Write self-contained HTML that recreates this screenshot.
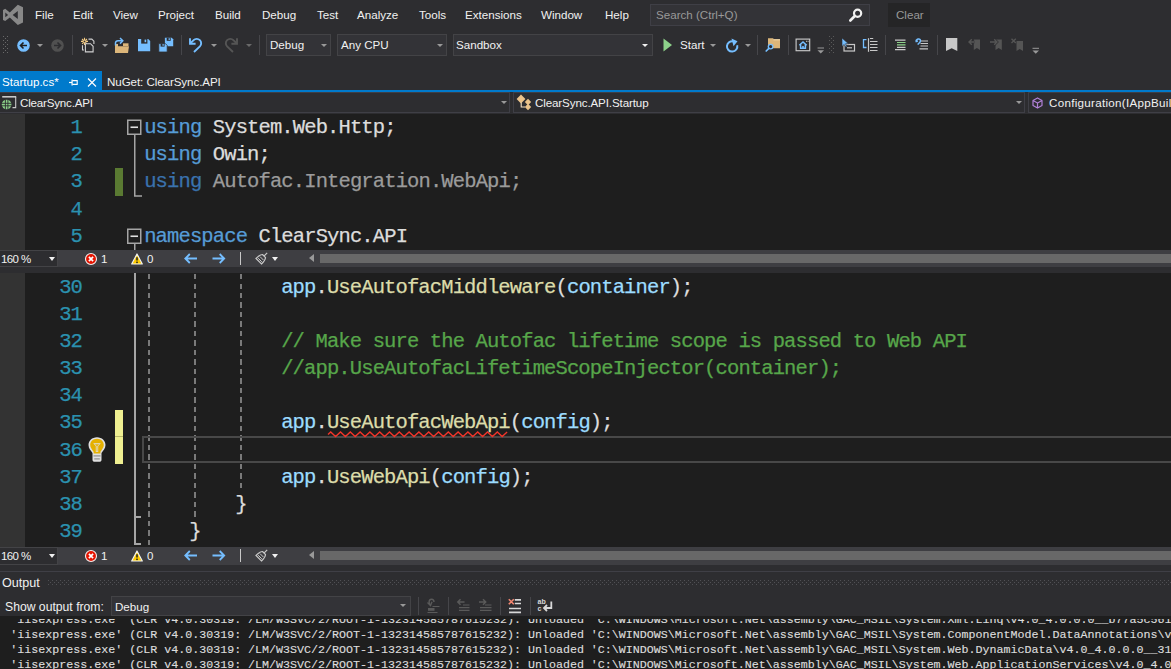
<!DOCTYPE html>
<html><head><meta charset="utf-8">
<style>
*{margin:0;padding:0;box-sizing:border-box}
html,body{width:1171px;height:669px;overflow:hidden;background:#2D2D30}
body{position:relative;font-family:"Liberation Sans",sans-serif;font-size:11.6px;color:#F1F1F1}
.a{position:absolute}
.t{position:absolute;white-space:pre;line-height:14px}
.mono{font-family:"Liberation Mono",monospace}
svg{position:absolute;overflow:visible}
.sep{position:absolute;width:1px;background:#46464A}
.dd{position:absolute;background:#333337;border:1px solid #434346}
.arr{position:absolute;width:0;height:0;border-left:3.2px solid transparent;border-right:3.2px solid transparent;border-top:3.5px solid #999999}
/* editor */
.ed{position:absolute;left:0;width:1171px;background:#1E1E1E;overflow:hidden}
.gm{position:absolute;left:0;top:0;bottom:0;width:25px;background:#333333}
.ln{position:absolute;width:82px;left:0;text-align:right;color:#2B91AF;font-family:"Liberation Mono",monospace;font-size:20.5px;letter-spacing:-0.872px;line-height:27.2px;height:27.2px;white-space:pre;-webkit-text-stroke:0.25px currentColor}
.cl{position:absolute;left:145px;font-family:"Liberation Mono",monospace;font-size:20.5px;letter-spacing:-0.872px;line-height:27.2px;height:27.2px;white-space:pre;color:#DCDCDC;-webkit-text-stroke:0.25px currentColor}
.k{color:#569CD6}.c{color:#57A64A}.m{color:#DCDCAA}.v{color:#9CDCFE}
.sb{position:absolute;left:0;width:1171px;height:17px;background:#3E3E42}
</style></head><body>

<!-- ===== MENU BAR ===== -->
<svg style="left:0;top:0" width="26" height="28" viewBox="0 0 26 28"><path d="M17.8 4.8 L23 7.3 V22.6 L17.8 25.1 L9.8 17.4 L5.2 21 L3 19.9 V9.9 L5.2 8.8 L9.8 12.4 Z M17.8 10.9 V19 L12.7 14.95 Z M5.3 12.6 V17.3 L8.1 14.95 Z" fill="#888888" fill-rule="evenodd"/></svg>
<div class="t" style="left:35px;top:8px">File</div>
<div class="t" style="left:73px;top:8px">Edit</div>
<div class="t" style="left:113px;top:8px">View</div>
<div class="t" style="left:158px;top:8px">Project</div>
<div class="t" style="left:215px;top:8px">Build</div>
<div class="t" style="left:262px;top:8px">Debug</div>
<div class="t" style="left:317px;top:8px">Test</div>
<div class="t" style="left:357px;top:8px">Analyze</div>
<div class="t" style="left:419px;top:8px">Tools</div>
<div class="t" style="left:465px;top:8px">Extensions</div>
<div class="t" style="left:541px;top:8px">Window</div>
<div class="t" style="left:605px;top:8px">Help</div>
<div class="a" style="left:650px;top:4px;width:220px;height:22px;background:#333337;border:1px solid #3F3F46"></div>
<div class="t" style="left:656px;top:8px;color:#999999">Search (Ctrl+Q)</div>
<svg style="left:849px;top:8px" width="14" height="14" viewBox="0 0 14 14"><circle cx="8.6" cy="5.2" r="3.6" stroke="#F1F1F1" stroke-width="2.2" fill="none"/><path d="M5.8 8 L1.3 12.5" stroke="#F1F1F1" stroke-width="2.6" stroke-linecap="round"/></svg>
<div class="a" style="left:888px;top:3px;width:42px;height:24px;background:#252526"></div>
<div class="t" style="left:896px;top:8px;color:#999999">Clear</div>

<!-- ===== TOOLBAR ===== -->
<svg style="left:3px;top:36px" width="6" height="17" viewBox="0 0 6 17">
  <g fill="#6A6A6A"><rect x="0" y="0" width="1" height="1"/><rect x="4" y="0" width="1" height="1"/><rect x="2" y="2" width="1" height="1"/><rect x="0" y="4" width="1" height="1"/><rect x="4" y="4" width="1" height="1"/><rect x="2" y="6" width="1" height="1"/><rect x="0" y="8" width="1" height="1"/><rect x="4" y="8" width="1" height="1"/><rect x="2" y="10" width="1" height="1"/><rect x="0" y="12" width="1" height="1"/><rect x="4" y="12" width="1" height="1"/><rect x="2" y="14" width="1" height="1"/><rect x="0" y="16" width="1" height="1"/><rect x="4" y="16" width="1" height="1"/></g>
</svg>
<svg style="left:16.5px;top:38.5px" width="13" height="13" viewBox="0 0 13 13"><circle cx="6.5" cy="6.5" r="6.3" fill="#75BEFF"/><path d="M10 6.5 H3.5 M6.5 3.5 L3.5 6.5 L6.5 9.5" stroke="#1E1E1E" stroke-width="1.6" fill="none"/></svg>
<div class="arr" style="left:37px;top:44px"></div>
<svg style="left:50.5px;top:38.5px" width="13" height="13" viewBox="0 0 13 13"><circle cx="6.5" cy="6.5" r="6.3" fill="#505050"/><path d="M3 6.5 H9.5 M6.5 3.5 L9.5 6.5 L6.5 9.5" stroke="#2D2D30" stroke-width="1.6" fill="none"/></svg>
<div class="sep" style="left:72px;top:35px;height:20px"></div>
<svg style="left:80px;top:37px" width="16" height="16" viewBox="0 0 16 16">
  <path d="M4.5 0.8 V8 M1 4.4 H8 M2.1 2 L6.9 6.8 M6.9 2 L2.1 6.8" stroke="#F5CC84" stroke-width="1.1"/>
  <circle cx="4.5" cy="4.4" r="1.2" fill="#2D2D30" stroke="#F5CC84" stroke-width="0.8"/>
  <path d="M8.5 2.1 H11.8 L13.9 4.2 V7" stroke="#D0D0D0" stroke-width="1.1" fill="none"/>
  <path d="M5.4 6.7 H10.5 L13.1 9.3 V14.9 H5.4 Z" stroke="#D0D0D0" stroke-width="1.1" fill="#2D2D30"/>
  <path d="M2.5 8.2 V13 H4" stroke="#D0D0D0" stroke-width="1.1" fill="none"/>
</svg>
<div class="arr" style="left:102px;top:44px"></div>
<svg style="left:114px;top:37px" width="16" height="17" viewBox="0 0 16 17">
  <path d="M1 7 H4 V16 H1 Z" fill="#DCB67A"/>
  <path d="M9 6.3 H14.5 V9 H9 Z" fill="#DCB67A"/>
  <path d="M1 9.3 H15 L14 15.9 H1 Z" fill="#DCB67A"/>
  <path d="M1.5 8.5 V6 C1.5 4.6 2.5 3.8 4 3.8 H8" stroke="#75BEFF" stroke-width="1.5" fill="none"/><path d="M6 1 L8.8 3.8 L6 6.6" stroke="#75BEFF" stroke-width="1.5" fill="none"/>
</svg>
<svg style="left:138px;top:39px" width="13" height="13" viewBox="0 0 13 13"><path d="M0 0 H10.2 L12.2 2 V12.2 H0 Z" fill="#75BEFF"/><rect x="3.2" y="0" width="6.2" height="4.6" fill="#2D2D30"/><rect x="6.6" y="0.6" width="1.6" height="2.6" fill="#75BEFF"/></svg>
<svg style="left:158px;top:37px" width="16" height="16" viewBox="0 0 16 16">
  <path d="M6.9 0.8 H13.8 L15.2 2.2 V9.2 H6.9 Z" fill="#75BEFF"/><rect x="8.7" y="0.8" width="4" height="3" fill="#2D2D30"/><rect x="10.6" y="1.2" width="1.2" height="1.8" fill="#75BEFF"/>
  <path d="M0.8 6.6 H7.4 L9.2 8.4 V15 H0.8 Z" fill="#75BEFF" stroke="#2D2D30" stroke-width="0.8"/><rect x="2.6" y="6.6" width="4" height="3" fill="#2D2D30"/><rect x="4.5" y="7" width="1.2" height="1.8" fill="#75BEFF"/>
</svg>
<div class="sep" style="left:181px;top:35px;height:20px"></div>
<svg style="left:188px;top:37px" width="16" height="16" viewBox="0 0 16 16"><path d="M2 1.2 V6.7 H7.6" stroke="#75BEFF" stroke-width="1.9" fill="none"/><path d="M2.4 6.3 L5.6 3.2 A4.4 4.4 0 0 1 11.9 9.4 L6 15" stroke="#75BEFF" stroke-width="1.9" fill="none"/></svg>
<div class="arr" style="left:211px;top:44px"></div>
<svg style="left:223px;top:37px" width="16" height="16" viewBox="0 0 16 16"><g transform="translate(16,0) scale(-1,1)"><path d="M2 1.2 V6.7 H7.6" stroke="#555555" stroke-width="1.9" fill="none"/><path d="M2.4 6.3 L5.6 3.2 A4.4 4.4 0 0 1 11.9 9.4 L6 15" stroke="#555555" stroke-width="1.9" fill="none"/></g></svg>
<div class="arr" style="left:246px;top:44px;border-top-color:#6A6A6A"></div>
<div class="sep" style="left:259px;top:35px;height:20px"></div>
<div class="dd" style="left:266px;top:34px;width:65px;height:22px"></div>
<div class="t" style="left:270px;top:38px">Debug</div>
<div class="arr" style="left:321px;top:44px"></div>
<div class="dd" style="left:337px;top:34px;width:110px;height:22px"></div>
<div class="t" style="left:341px;top:38px">Any CPU</div>
<div class="arr" style="left:437px;top:44px"></div>
<div class="dd" style="left:453px;top:34px;width:200px;height:22px"></div>
<div class="t" style="left:456px;top:38px">Sandbox</div>
<div class="arr" style="left:642px;top:44px;border-top-color:#F1F1F1"></div>
<svg style="left:663px;top:38px" width="10" height="14" viewBox="0 0 10 14"><path d="M0.5 0.5 L9 7 L0.5 13.5 Z" fill="#8DD28A"/></svg>
<div class="t" style="left:680px;top:38px">Start</div>
<div class="arr" style="left:710px;top:44px"></div>
<svg style="left:724.5px;top:38px" width="15" height="16" viewBox="0 0 15 16"><path d="M12.2 7.2 A5.2 5.2 0 1 1 8.6 3.4" stroke="#75BEFF" stroke-width="2" fill="none"/><path d="M6.5 0.5 L12.5 3.3 L8.5 8.3 Z" fill="#75BEFF"/></svg>
<div class="arr" style="left:745px;top:44px"></div>
<div class="sep" style="left:757px;top:35px;height:20px"></div>
<svg style="left:765px;top:37px" width="17" height="16" viewBox="0 0 17 16"><path d="M3 1.2 H8 L9 2.2 H15 V11.2 H3 Z" fill="#DCB67A"/><path d="M8.5 2.2 H15 V3.4 H8.5 Z" fill="#EDD3A5"/><circle cx="5.6" cy="9.6" r="2.3" fill="#2D2D30" stroke="#75BEFF" stroke-width="1.3"/><path d="M3.9 11.3 L1.2 14" stroke="#75BEFF" stroke-width="1.7" stroke-linecap="round"/></svg>
<div class="sep" style="left:788px;top:35px;height:20px"></div>
<svg style="left:795px;top:38px" width="16" height="14" viewBox="0 0 16 14"><rect x="1.1" y="1.1" width="13.6" height="11.6" fill="none" stroke="#C8C8C8" stroke-width="1.15"/><path d="M4.3 7.3 L8 4 L11.7 7.3 M5.6 6.5 V10.3 H10.4 V6.5" stroke="#75BEFF" stroke-width="1.5" fill="none"/><rect x="7.2" y="8" width="1.6" height="2.3" fill="#75BEFF"/><rect x="11" y="2.8" width="1" height="1" fill="#C8C8C8"/><rect x="12.6" y="2.8" width="1" height="1" fill="#C8C8C8"/></svg>
<svg style="left:817px;top:47px" width="8" height="7" viewBox="0 0 8 7"><rect x="0.5" y="0.5" width="6.5" height="1" fill="#999"/><path d="M0.5 3.2 H7 L3.75 6.5 Z" fill="#999"/></svg>
<svg style="left:829px;top:36px" width="6" height="18" viewBox="0 0 6 18"><g fill="#5A5A5A"><rect x="0" y="0" width="1" height="1"/><rect x="4" y="0" width="1" height="1"/><rect x="2" y="2" width="1" height="1"/><rect x="0" y="4" width="1" height="1"/><rect x="4" y="4" width="1" height="1"/><rect x="2" y="6" width="1" height="1"/><rect x="0" y="8" width="1" height="1"/><rect x="4" y="8" width="1" height="1"/><rect x="2" y="10" width="1" height="1"/><rect x="0" y="12" width="1" height="1"/><rect x="4" y="12" width="1" height="1"/><rect x="2" y="14" width="1" height="1"/><rect x="0" y="16" width="1" height="1"/><rect x="4" y="16" width="1" height="1"/></g></svg>
<svg style="left:841px;top:37px" width="16" height="15" viewBox="0 0 16 15"><rect x="3" y="7.5" width="10.5" height="6.5" fill="#2D2D30" stroke="#C8C8C8" stroke-width="1.2"/><rect x="6" y="10.2" width="5" height="1.2" fill="#C8C8C8"/><path d="M1 1 V9.5 L3.2 7.4 L4.8 10.2 L6 9.6 L4.5 6.8 H7.5 Z" fill="#75BEFF" stroke="#2D2D30" stroke-width="0.6"/></svg>
<svg style="left:862px;top:37px" width="17" height="16" viewBox="0 0 17 16"><path d="M4.5 2.6 H1.5 V10.5 H4.5" stroke="#75BEFF" stroke-width="1.3" fill="none"/><path d="M6.5 1.2 V14.8" stroke="#C8C8C8" stroke-width="1.2"/><path d="M8 1.5 H11.2 M8 4.5 H15.5 M8 7.5 H15.5 M8 10.5 H15.5 M8 13.5 H15.5" stroke="#C8C8C8" stroke-width="1.2"/></svg>
<div class="sep" style="left:885px;top:35px;height:20px"></div>
<svg style="left:894px;top:38px" width="12" height="13" viewBox="0 0 12 13"><path d="M1 2.2 H11.5 M1 11.7 H11.5 M3 9.3 H11.5" stroke="#C8C8C8" stroke-width="1.2"/><path d="M3 4.5 H11.5 M3 6.9 H11.5" stroke="#8DD28A" stroke-width="1.2"/></svg>
<svg style="left:915px;top:38px" width="14" height="13" viewBox="0 0 14 13"><path d="M5.5 3 H13 M5.5 5.5 H13 M5.5 8 H13 M4.5 10.8 H13" stroke="#C8C8C8" stroke-width="1.2"/><path d="M1.2 2.2 L2.8 3.6 M1.2 1.8 V4.2 M1.6 2 C2.6 0.5 5.5 0.6 5.5 2.8 C5.5 4.6 3.5 5.6 2.6 6.6" stroke="#75BEFF" stroke-width="1.5" fill="none"/></svg>
<div class="sep" style="left:937px;top:35px;height:20px"></div>
<svg style="left:946px;top:38px" width="12" height="14" viewBox="0 0 12 14"><path d="M0 0 H11.3 V13 L5.65 10.2 L0 13 Z" fill="#C8C8C8"/></svg>
<svg style="left:968px;top:38px" width="14" height="13" viewBox="0 0 14 13"><path d="M5.8 1.5 H12 V12 L8.9 10 L5.8 12 Z" fill="#555555"/><path d="M1 4 H6.5 M3.8 1.2 L1 4 L3.8 6.8" stroke="#2D2D30" stroke-width="2.6" fill="none"/><path d="M1 4 H6.5 M3.8 1.2 L1 4 L3.8 6.8" stroke="#555555" stroke-width="1.4" fill="none"/></svg>
<svg style="left:989px;top:38px" width="14" height="13" viewBox="0 0 14 13"><path d="M6.5 1.5 H12.8 V12 L9.65 10 L6.5 12 Z" fill="#555555"/><path d="M1 4 H8 M5.2 1.2 L8 4 L5.2 6.8" stroke="#2D2D30" stroke-width="2.6" fill="none"/><path d="M1 4 H8 M5.2 1.2 L8 4 L5.2 6.8" stroke="#555555" stroke-width="1.4" fill="none"/></svg>
<svg style="left:1010px;top:38px" width="14" height="14" viewBox="0 0 14 14"><path d="M6.5 3 H13 V13 L9.75 11 L6.5 13 Z" fill="#555555"/><path d="M1.5 0.8 L5.8 5.1 M5.8 0.8 L1.5 5.1" stroke="#555555" stroke-width="1.4"/></svg>
<svg style="left:1032px;top:47px" width="8" height="7" viewBox="0 0 8 7"><rect x="0.5" y="0.8" width="6.5" height="1" fill="#999"/><path d="M0.5 3.5 H7 L3.75 6.8 Z" fill="#999"/></svg>
<!-- ===== TABS ===== -->
<div class="a" style="left:0;top:71px;width:102px;height:19px;background:#007ACC"></div>
<div class="t" style="left:2px;top:75px;color:#FFFFFF">Startup.cs*</div>
<svg style="left:69px;top:79px" width="9" height="7" viewBox="0 0 9 7"><path d="M0 3.5 H3" stroke="#FFFFFF" stroke-width="1.2"/><path d="M3.1 0.5 V6.5" stroke="#FFFFFF" stroke-width="1.2"/><path d="M3.5 1.6 H8.2 V5.4 H3.5" stroke="#FFFFFF" stroke-width="1.1" fill="none"/></svg>
<svg style="left:87px;top:77.5px" width="10" height="9" viewBox="0 0 10 9"><path d="M1 0.5 L9 8.5 M9 0.5 L1 8.5" stroke="#FFFFFF" stroke-width="1.15"/></svg>
<div class="t" style="left:107px;top:74.5px;color:#F1F1F1;letter-spacing:-0.08px">NuGet: ClearSync.API</div>
<div class="a" style="left:0;top:90px;width:1171px;height:2px;background:#007ACC"></div>

<!-- ===== NAV BAR ===== -->
<div class="a" style="left:0;top:92px;width:1171px;height:21px;background:#2D2D30"></div>
<div class="dd" style="left:-1px;top:92px;width:511px;height:21px;background:#2D2D30;border-color:#3F3F46"></div>
<div class="dd" style="left:513px;top:92px;width:512px;height:21px;background:#2D2D30;border-color:#3F3F46"></div>
<div class="dd" style="left:1028px;top:92px;width:150px;height:21px;background:#2D2D30;border-color:#3F3F46"></div>
<svg style="left:0;top:94px" width="18" height="18" viewBox="0 0 18 18"><rect x="2.2" y="2" width="14" height="1.6" fill="#C8C8C8"/><path d="M15.7 3 V13.6 H12.5" stroke="#C8C8C8" stroke-width="1.1" fill="none"/><circle cx="6.6" cy="10.5" r="4.8" fill="#8DD28A"/><path d="M1.8 9.3 H11.4 M1.8 11.8 H11.4 M5.4 5.7 V15.3 M7.9 5.7 V15.3" stroke="#2D2D30" stroke-width="0.9"/></svg>
<div class="t" style="left:20px;top:96px;letter-spacing:-0.2px">ClearSync.API</div>
<div class="arr" style="left:501px;top:101px"></div>
<svg style="left:516px;top:94px" width="17" height="17" viewBox="0 0 17 17"><path d="M5 0.6 L9.4 5 L5 9.4 L0.6 5 Z" fill="#EBC38B"/><path d="M12 4.8 L15.2 8 L12 11.2 L8.8 8 Z" fill="#EBC38B"/><path d="M12 9.8 L15.2 13 L12 16.2 L8.8 13 Z" fill="#EBC38B"/><path d="M5.2 8.5 V13 H9" stroke="#F5E0C0" stroke-width="1.1" fill="none"/></svg>
<div class="t" style="left:535px;top:96px;letter-spacing:-0.12px">ClearSync.API.Startup</div>
<div class="arr" style="left:1016px;top:101px"></div>
<svg style="left:1032px;top:97px" width="11" height="12" viewBox="0 0 11 12"><path d="M5.5 0.9 L10 3.4 V8.6 L5.5 11.1 L1 8.6 V3.4 Z M1 3.4 L5.5 5.9 L10 3.4 M5.5 5.9 V11.1" stroke="#B180D7" stroke-width="1.2" fill="none" stroke-linejoin="round"/></svg>
<div class="t" style="left:1049px;top:96px;letter-spacing:0.3px">Configuration(IAppBuilder app)</div>

<!-- ===== EDITOR TOP PANE ===== -->
<div class="ed" style="top:114px;height:136px">
  <div class="gm"></div>
  <div class="ln" style="top:-0.07px">1</div>
  <div class="ln" style="top:27.18px">2</div>
  <div class="ln" style="top:54.43px">3</div>
  <div class="ln" style="top:81.68px">4</div>
  <div class="ln" style="top:108.93px">5</div>
  <div class="a" style="left:115px;top:54px;width:8px;height:28px;background:#5A7A32"></div>
  <svg style="left:127px;top:6px" width="16" height="130" viewBox="0 0 16 130">
    <rect x="0.75" y="0.25" width="13" height="14" fill="#1E1E1E" stroke="#A5A5A5" stroke-width="1.5"/>
    <path d="M3.5 7.25 H11" stroke="#E0E0E0" stroke-width="1.6"/>
    <path d="M7.75 15 V76 H15" stroke="#A5A5A5" stroke-width="1.5" fill="none"/>
    <rect x="0.75" y="109.25" width="13" height="14" fill="#1E1E1E" stroke="#A5A5A5" stroke-width="1.5"/>
    <path d="M3.5 116.25 H11" stroke="#E0E0E0" stroke-width="1.6"/>
    <path d="M7.75 124 V131" stroke="#A5A5A5" stroke-width="1.5" fill="none"/>
  </svg>
  <div class="cl" style="left:144.2px;top:-0.07px"><span class="k">using</span> System.Web.Http;</div>
  <div class="cl" style="left:144.2px;top:27.18px"><span class="k">using</span> Owin;</div>
  <div class="cl" style="left:144.2px;top:54.43px;color:#9B9B9B"><span style="color:#3A72AD">using</span> Autofac.Integration.WebApi;</div>
  <div class="cl" style="left:144.2px;top:108.93px"><span class="k">namespace</span> ClearSync.API</div>
</div>

<!-- ===== STATUS BAR 1 ===== -->
<div class="sb" style="top:250px;height:17px"></div>
<div class="a" style="left:0;top:250px;width:58px;height:17px;background:#2D2D30;border:1px solid #434346;border-left:0"></div>
<div class="t" style="left:1px;top:252px;font-size:11.5px;letter-spacing:-0.6px">160 %</div>
<div class="a" style="left:49px;top:257px;width:0;height:0;border-left:3.5px solid transparent;border-right:3.5px solid transparent;border-top:4px solid #F1F1F1"></div>
<svg style="left:85px;top:253px" width="12" height="12" viewBox="0 0 12 12"><circle cx="6" cy="6" r="5.5" fill="#E51400" stroke="#F0F0F0" stroke-width="1.1"/><path d="M3.9 3.9 L8.1 8.1 M8.1 3.9 L3.9 8.1" stroke="#FFFFFF" stroke-width="1.7"/></svg>
<div class="t" style="left:101px;top:252px;font-size:11.5px;letter-spacing:-0.6px">1</div>
<svg style="left:131px;top:253px" width="12" height="12" viewBox="0 0 12 12"><path d="M6 1 L11.3 11 H0.7 Z" fill="#FFCC00" stroke="#F0F0F0" stroke-width="1.2" stroke-linejoin="round"/><path d="M6 4.2 V7.6" stroke="#1E1E1E" stroke-width="1.5"/><rect x="5.25" y="8.6" width="1.5" height="1.5" fill="#1E1E1E"/></svg>
<div class="t" style="left:147px;top:252px;font-size:11.5px;letter-spacing:-0.6px">0</div>
<svg style="left:184px;top:253px" width="14" height="11" viewBox="0 0 14 11"><path d="M13 5.5 H1.3 M5.8 1 L1.3 5.5 L5.8 10" stroke="#75BEFF" stroke-width="1.8" fill="none"/></svg>
<svg style="left:212px;top:253px" width="14" height="11" viewBox="0 0 14 11"><path d="M0.5 5.5 H12.2 M7.7 1 L12.2 5.5 L7.7 10" stroke="#75BEFF" stroke-width="1.8" fill="none"/></svg>
<div class="a" style="left:240px;top:252px;width:1px;height:13px;background:#C8C8C8"></div>
<svg style="left:255px;top:252px" width="13" height="13" viewBox="0 0 13 13"><path d="M12.2 0.8 L9.2 3.8" stroke="#C8C8C8" stroke-width="1.2"/><path d="M7.5 2.5 L10.5 5.5 C10.5 7 9.5 9 6.5 12 L1 6.5 C4 3.5 6 2.5 7.5 2.5 Z" fill="none" stroke="#C8C8C8" stroke-width="1.2"/><path d="M3.2 6.2 L6.8 9.8 M5 4.6 L8.4 8" stroke="#C8C8C8" stroke-width="1"/></svg>
<div class="a" style="left:272px;top:257px;width:0;height:0;border-left:3.5px solid transparent;border-right:3.5px solid transparent;border-top:4px solid #F1F1F1"></div>
<div class="a" style="left:309px;top:254px;width:0;height:0;border-top:4.5px solid transparent;border-bottom:4.5px solid transparent;border-right:5px solid #999999"></div>
<div class="a" style="left:320px;top:254px;width:851px;height:9px;background:#686868"></div>

<!-- splitter -->
<div class="a" style="left:0;top:267px;width:1171px;height:6px;background:#2D2D30"></div>

<!-- ===== EDITOR BOTTOM PANE ===== -->
<div class="ed" style="top:273px;height:274px">
  <div class="gm"></div>
  <div class="ln" style="top:0.93px">30</div>
  <div class="ln" style="top:28.04px">31</div>
  <div class="ln" style="top:55.15px">32</div>
  <div class="ln" style="top:82.26px">33</div>
  <div class="ln" style="top:109.37px">34</div>
  <div class="ln" style="top:136.48px">35</div>
  <div class="ln" style="top:163.59px">36</div>
  <div class="ln" style="top:190.70px">37</div>
  <div class="ln" style="top:217.81px">38</div>
  <div class="ln" style="top:244.92px">39</div>
  <div class="a" style="left:115px;top:137px;width:8px;height:54px;background:#EFEF91"></div>
  <div class="a" style="left:115px;top:163px;width:8px;height:1px;background:#B8B86A"></div>
  <div class="a" style="left:134px;top:0;width:2px;height:272px;background:#A5A5A5"></div>
  <div class="a" style="left:136px;top:243px;width:5px;height:2px;background:#A5A5A5"></div>
  <div class="a" style="left:136px;top:270px;width:5px;height:2px;background:#A5A5A5"></div>
  <div class="a" style="left:148px;top:1px;width:2px;height:272px;background:repeating-linear-gradient(#7A7A7A 0 5px,transparent 5px 9.5px)"></div>
  <div class="a" style="left:194px;top:1px;width:2px;height:245px;background:repeating-linear-gradient(#7A7A7A 0 5px,transparent 5px 9.5px)"></div>
  <div class="a" style="left:240px;top:1px;width:2px;height:218px;background:repeating-linear-gradient(#7A7A7A 0 5px,transparent 5px 9.5px)"></div>
  <div class="a" style="left:142px;top:163px;width:1040px;height:27px;border:2px solid #484848"></div>
  <div class="cl" style="left:281.2px;top:0.93px"><span class="v">app</span>.<span class="m">UseAutofacMiddleware</span>(<span class="v">container</span>);</div>
  <div class="cl" style="left:281.2px;top:55.15px"><span class="c">// Make sure the Autofac lifetime scope is passed to Web API</span></div>
  <div class="cl" style="left:281.2px;top:82.26px"><span class="c">//app.UseAutofacLifetimeScopeInjector(container);</span></div>
  <div class="cl" style="left:281.2px;top:136.48px"><span class="v">app</span>.<span class="m">UseAutofacWebApi</span>(<span class="v">config</span>);</div>
  <div class="cl" style="left:281.2px;top:190.70px"><span class="v">app</span>.<span class="m">UseWebApi</span>(<span class="v">config</span>);</div>
  <div class="cl" style="left:235.2px;top:217.81px">}</div>
  <div class="cl" style="left:189.2px;top:244.92px">}</div>
  <svg style="left:328px;top:156.8px" width="184" height="9" viewBox="0 0 184 9"><path d="M0 4.6 L2.70 1.9 L7.60 6.6 L12.50 1.9 L17.40 6.6 L22.30 1.9 L27.20 6.6 L32.10 1.9 L37.00 6.6 L41.90 1.9 L46.80 6.6 L51.70 1.9 L56.60 6.6 L61.50 1.9 L66.40 6.6 L71.30 1.9 L76.20 6.6 L81.10 1.9 L86.00 6.6 L90.90 1.9 L95.80 6.6 L100.70 1.9 L105.60 6.6 L110.50 1.9 L115.40 6.6 L120.30 1.9 L125.20 6.6 L130.10 1.9 L135.00 6.6 L139.90 1.9 L144.80 6.6 L149.70 1.9 L154.60 6.6 L159.50 1.9 L164.40 6.6 L169.30 1.9 L174.20 6.6 L179.10 1.9" stroke="#F0352A" stroke-width="1.35" fill="none"/></svg>
  <svg style="left:87px;top:163px" width="20" height="27" viewBox="0 0 20 27">
    <path d="M10 1.2 C5 1.2 1.5 4.8 1.5 9 C1.5 12.5 4 14.5 5.5 17 V24 C5.5 25 6.5 25.8 7.5 25.8 H12.5 C13.5 25.8 14.5 25 14.5 24 V17 C16 14.5 18.5 12.5 18.5 9 C18.5 4.8 15 1.2 10 1.2 Z" fill="#E0E0E0"/>
    <path d="M10 2.8 C6 2.8 3.2 5.6 3.2 9 C3.2 11.8 5.2 13.6 6.6 15.8 V17.5 H13.4 V15.8 C14.8 13.6 16.8 11.8 16.8 9 C16.8 5.6 14 2.8 10 2.8 Z" fill="#E5B000"/>
    <path d="M6.2 7.2 H13.8 L11.2 10 V16 H8.8 V10 Z" fill="#E0E0E0"/>
    <path d="M7.8 8.3 H12.2 L10.4 10 V15.5 H9.6 V10 Z" fill="#E5B000"/>
    <rect x="6.5" y="19.2" width="7" height="1.4" fill="#9A9A9A"/>
    <rect x="7.2" y="22.2" width="5.6" height="1.4" fill="#9A9A9A"/>
  </svg>
</div>

<!-- ===== STATUS BAR 2 ===== -->
<div class="sb" style="top:547px;height:18px"></div>
<div class="a" style="left:0;top:547px;width:58px;height:18px;background:#2D2D30;border:1px solid #434346;border-left:0"></div>
<div class="t" style="left:1px;top:549px;font-size:11.5px;letter-spacing:-0.6px">160 %</div>
<div class="a" style="left:49px;top:554px;width:0;height:0;border-left:3.5px solid transparent;border-right:3.5px solid transparent;border-top:4px solid #F1F1F1"></div>
<svg style="left:85px;top:550px" width="12" height="12" viewBox="0 0 12 12"><circle cx="6" cy="6" r="5.5" fill="#E51400" stroke="#F0F0F0" stroke-width="1.1"/><path d="M3.9 3.9 L8.1 8.1 M8.1 3.9 L3.9 8.1" stroke="#FFFFFF" stroke-width="1.7"/></svg>
<div class="t" style="left:101px;top:549px;font-size:11.5px;letter-spacing:-0.6px">1</div>
<svg style="left:131px;top:550px" width="12" height="12" viewBox="0 0 12 12"><path d="M6 1 L11.3 11 H0.7 Z" fill="#FFCC00" stroke="#F0F0F0" stroke-width="1.2" stroke-linejoin="round"/><path d="M6 4.2 V7.6" stroke="#1E1E1E" stroke-width="1.5"/><rect x="5.25" y="8.6" width="1.5" height="1.5" fill="#1E1E1E"/></svg>
<div class="t" style="left:147px;top:549px;font-size:11.5px;letter-spacing:-0.6px">0</div>
<svg style="left:184px;top:550px" width="14" height="11" viewBox="0 0 14 11"><path d="M13 5.5 H1.3 M5.8 1 L1.3 5.5 L5.8 10" stroke="#75BEFF" stroke-width="1.8" fill="none"/></svg>
<svg style="left:212px;top:550px" width="14" height="11" viewBox="0 0 14 11"><path d="M0.5 5.5 H12.2 M7.7 1 L12.2 5.5 L7.7 10" stroke="#75BEFF" stroke-width="1.8" fill="none"/></svg>
<div class="a" style="left:240px;top:549px;width:1px;height:13px;background:#C8C8C8"></div>
<svg style="left:255px;top:549px" width="13" height="13" viewBox="0 0 13 13"><path d="M12.2 0.8 L9.2 3.8" stroke="#C8C8C8" stroke-width="1.2"/><path d="M7.5 2.5 L10.5 5.5 C10.5 7 9.5 9 6.5 12 L1 6.5 C4 3.5 6 2.5 7.5 2.5 Z" fill="none" stroke="#C8C8C8" stroke-width="1.2"/><path d="M3.2 6.2 L6.8 9.8 M5 4.6 L8.4 8" stroke="#C8C8C8" stroke-width="1"/></svg>
<div class="a" style="left:272px;top:554px;width:0;height:0;border-left:3.5px solid transparent;border-right:3.5px solid transparent;border-top:4px solid #F1F1F1"></div>
<div class="a" style="left:309px;top:551px;width:0;height:0;border-top:4.5px solid transparent;border-bottom:4.5px solid transparent;border-right:5px solid #999999"></div>
<div class="a" style="left:320px;top:551px;width:851px;height:9px;background:#686868"></div>

<!-- ===== OUTPUT PANEL ===== -->
<div class="a" style="left:0;top:571px;width:1171px;height:1px;background:#3F3F46"></div>
<div class="t" style="left:2px;top:576px;font-size:12.6px">Output</div>
<div class="a" style="left:48px;top:580px;width:1123px;height:1px;background:repeating-linear-gradient(90deg,#505054 0 1px,transparent 1px 4px)"></div><div class="a" style="left:50px;top:582px;width:1121px;height:1px;background:repeating-linear-gradient(90deg,#505054 0 1px,transparent 1px 4px)"></div><div class="a" style="left:48px;top:584px;width:1123px;height:1px;background:repeating-linear-gradient(90deg,#505054 0 1px,transparent 1px 4px)"></div>
<div class="t" style="left:5px;top:600px;font-size:12.2px">Show output from:</div>
<div class="dd" style="left:111px;top:596px;width:300px;height:20px"></div>
<div class="t" style="left:115px;top:600px">Debug</div>
<div class="arr" style="left:400px;top:604px"></div>
<div class="sep" style="left:418px;top:597px;height:18px"></div>
<svg style="left:426px;top:598px" width="15" height="16" viewBox="0 0 15 16"><path d="M4.5 7 C2.5 5.5 2.5 1.2 5.5 1.2 C7.5 1.2 8 3 8 4" stroke="#5A5A5A" stroke-width="1.4" fill="none"/><path d="M1.5 4.5 L4.5 7.5 L6 3.8" stroke="#5A5A5A" stroke-width="1.4" fill="none"/><path d="M6.5 8.5 H13.5 M1.5 14.5 H11.5" stroke="#5A5A5A" stroke-width="1.1"/><rect x="2" y="10" width="6.5" height="2.8" fill="#5A5A5A"/></svg>
<div class="sep" style="left:448px;top:597px;height:18px"></div>
<svg style="left:456px;top:598px" width="14" height="15" viewBox="0 0 14 15"><path d="M8.5 4 H2 M4.5 1.3 L1.8 4 L4.5 6.7" stroke="#5A5A5A" stroke-width="1.5" fill="none"/><path d="M7 7 H13.5 M3 9.6 H13.5 M3 12.4 H13.5" stroke="#5A5A5A" stroke-width="1.2"/></svg>
<svg style="left:478px;top:598px" width="14" height="15" viewBox="0 0 14 15"><path d="M1 4 H7.5 M5 1.3 L7.7 4 L5 6.7" stroke="#5A5A5A" stroke-width="1.5" fill="none"/><path d="M7 7 H13.5 M2 9.6 H13.5 M2 12.4 H13.5" stroke="#5A5A5A" stroke-width="1.2"/></svg>
<div class="sep" style="left:500px;top:597px;height:18px"></div>
<svg style="left:508px;top:598px" width="14" height="16" viewBox="0 0 14 16"><path d="M0.8 1.2 L5.8 6.2 M5.8 1.2 L0.8 6.2" stroke="#F48771" stroke-width="1.6"/><path d="M6.8 1.8 H13 M6.8 5.5 H13 M1 10.5 H13 M1 14.3 H13" stroke="#D8D8D8" stroke-width="1.7"/></svg>
<div class="sep" style="left:530px;top:597px;height:18px"></div>
<svg style="left:537px;top:598px" width="16" height="15" viewBox="0 0 16 15"><text x="0.5" y="6" font-family="Liberation Sans" font-weight="bold" font-size="7" fill="#D8D8D8">ab</text><text x="0.5" y="13" font-family="Liberation Sans" font-weight="bold" font-size="7" fill="#D8D8D8">c</text><path d="M14.3 3.5 V10 H8" stroke="#D8D8D8" stroke-width="1.8" fill="none"/><path d="M10 7 L7 10 L10 13" stroke="#D8D8D8" stroke-width="1.8" fill="none"/></svg>

<div class="a" style="left:0;top:616px;width:1171px;height:53px;background:#1E1E1E"></div><div class="a" style="left:0;top:619px;width:1171px;height:50px;background:#1E1E1E;overflow:hidden">
  <div class="mono" style="position:absolute;left:10.3px;top:-6.4px;font-size:11.668px;-webkit-text-stroke:0.15px currentColor;line-height:15px;white-space:pre;color:#DCDCDC">'iisexpress.exe' (CLR v4.0.30319: /LM/W3SVC/2/ROOT-1-132314585787615232): Unloaded 'C:\WINDOWS\Microsoft.Net\assembly\GAC_MSIL\System.Xml.Linq\v4.0_4.0.0.0__b77a5c561934e089\System.Xml.Linq.dll'
'iisexpress.exe' (CLR v4.0.30319: /LM/W3SVC/2/ROOT-1-132314585787615232): Unloaded 'C:\WINDOWS\Microsoft.Net\assembly\GAC_MSIL\System.ComponentModel.DataAnnotations\v4.0_4.0.0.0__31bf3856ad364e35\System.ComponentModel.DataAnnotations.dll'
'iisexpress.exe' (CLR v4.0.30319: /LM/W3SVC/2/ROOT-1-132314585787615232): Unloaded 'C:\WINDOWS\Microsoft.Net\assembly\GAC_MSIL\System.Web.DynamicData\v4.0_4.0.0.0__31bf3856ad364e35\System.Web.DynamicData.dll'
'iisexpress.exe' (CLR v4.0.30319: /LM/W3SVC/2/ROOT-1-132314585787615232): Unloaded 'C:\WINDOWS\Microsoft.Net\assembly\GAC_MSIL\System.Web.ApplicationServices\v4.0_4.0.0.0__31bf3856ad364e35\System.Web.ApplicationServices.dll'</div>
</div>
</body></html>
